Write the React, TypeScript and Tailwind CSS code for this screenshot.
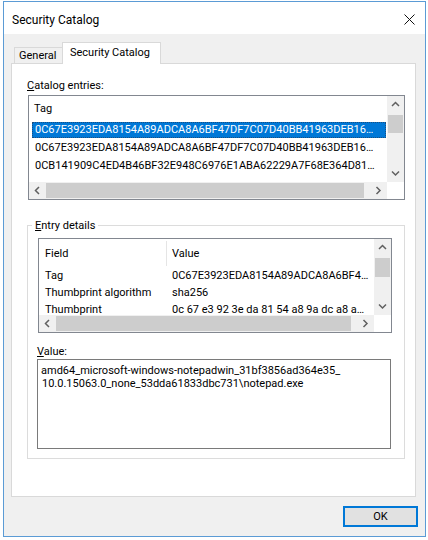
type Dir = "up" | "down" | "left" | "right";

function Arrow({ dir }: { dir: Dir }) {
  const vertical = dir === "up" || dir === "down";
  const pts = {
    up: "1,5 4.5,1.5 8,5",
    down: "1,1.5 4.5,5 8,1.5",
    left: "5,1 1.5,4.5 5,8",
    right: "1.5,1 5,4.5 1.5,8",
  }[dir];
  return (
    <svg width={vertical ? 9 : 7} height={vertical ? 7 : 9} viewBox={vertical ? "0 0 9 7" : "0 0 7 9"}>
      <polyline points={pts} fill="none" stroke="#606060" strokeWidth="1.5" />
    </svg>
  );
}

function VScroll({ thumb }: { thumb: string }) {
  return (
    <div className="flex flex-col bg-[#f0f0f0]">
      <div className="h-[17px] flex items-center justify-center">
        <Arrow dir="up" />
      </div>
      <div className={`mt-[2px] mx-[1px] bg-[#cdcdcd] ${thumb}`} />
      <div className="flex-1" />
      <div className="h-[17px] flex items-center justify-center">
        <Arrow dir="down" />
      </div>
    </div>
  );
}

function HScroll({ thumb }: { thumb: string }) {
  return (
    <div className="flex bg-[#f0f0f0]">
      <div className="w-[17px] flex items-center justify-center">
        <Arrow dir="left" />
      </div>
      <div className={`my-[1px] bg-[#cdcdcd] ${thumb}`} />
      <div className="flex-1" />
      <div className="w-[17px] flex items-center justify-center">
        <Arrow dir="right" />
      </div>
    </div>
  );
}

const catalogRows = [
  "0C67E3923EDA8154A89ADCA8A6BF47DF7C07D40BB41963DEB16…",
  "0C67E3923EDA8154A89ADCA8A6BF47DF7C07D40BB41963DEB16…",
  "0CB141909C4ED4B46BF32E948C6976E1ABA62229A7F68E364D81…",
];

const detailRows = [
  { field: "Tag", value: "0C67E3923EDA8154A89ADCA8A6BF47DF7C07D40BB41963DEB16…" },
  { field: "Thumbprint algorithm", value: "sha256" },
  { field: "Thumbprint", value: "0c 67 e3 92 3e da 81 54 a8 9a dc a8 a6 bf 47 df…" },
];

export default function App() {
  return (
    <div className="w-[428px] h-[540px] bg-white pt-[1px] pl-[3px] font-['Roboto','Liberation_Sans',sans-serif] text-[11px] text-black">
      <div className="w-[423px] h-[536px] border border-[#5b9bd5] bg-[#f0f0f0] flex flex-col">
        {/* title bar */}
        <div className="h-[32px] bg-white flex items-start justify-between pl-[8px] pr-[10px] pt-[11px]">
          <span className="text-[12px] leading-[15px]">Security Catalog</span>
          <svg width="11" height="11" viewBox="0 0 11 11" className="mt-[1px]">
            <path d="M0.5 0.5 L10.5 10.5 M10.5 0.5 L0.5 10.5" stroke="#111" strokeWidth="1" fill="none" />
          </svg>
        </div>

        <div className="flex-1 pl-[7px] pt-[8px]">
          {/* tabs */}
          <div className="flex items-end pl-[3px]">
            <div className="h-[16px] w-[48px] border-t border-l border-[#d9d9d9] flex items-center pl-[4px] pt-[1px]">
              General
            </div>
            <div className="relative z-10 h-[22px] w-[99px] -mb-px bg-white border-t border-l border-r border-[#d9d9d9] flex items-center pl-[7px]">
              Security Catalog
            </div>
          </div>

          {/* tab panel */}
          <div className="w-[405px] h-[434px] border border-[#d9d9d9] bg-white flex flex-col">
            <div className="mt-[15px] ml-[15px] leading-[13px]">
              <span className="underline">C</span>atalog entries:
            </div>

            {/* catalog list */}
            <div className="mt-[3px] ml-[16px] w-[377px] h-[105px] border border-[#828790] grid grid-cols-[1fr_17px] grid-rows-[1fr_17px]">
              <div className="overflow-hidden bg-white">
                <div className="h-[25px] flex items-center pl-[5px] pt-[2px]">Tag</div>
                {catalogRows.map((r, i) => (
                  <div key={i} className="h-[18px] pl-[3px] pr-[1px] flex">
                    <div
                      className={
                        i === 0
                          ? "flex-1 min-w-0 my-px pl-[2px] flex items-center bg-[#0078d7] text-white border border-dotted border-[#1b4f80]"
                          : "flex-1 min-w-0 pl-[3px] flex items-center"
                      }
                    >
                      <span className="block truncate">{r}</span>
                    </div>
                  </div>
                ))}
              </div>
              <VScroll thumb="h-[18px]" />
              <HScroll thumb="w-[318px]" />
              <div className="bg-white" />
            </div>

            {/* entry details group */}
            <div className="relative mt-[25px] ml-[15px] w-[378px] border border-[#dcdcdc] pb-[9px]">
              <span className="absolute -top-[7px] left-[4px] bg-white px-[3px] leading-[14px]">
                <span className="underline">E</span>ntry details
              </span>

              <div className="mt-[12px] ml-[10px] w-[354px] h-[95px] border border-[#828790] grid grid-cols-[1fr_17px] grid-rows-[1fr_17px]">
                <div className="overflow-hidden bg-white">
                  <div className="h-[29px] flex">
                    <div className="w-[127px] pl-[6px] flex items-center pt-[1px]">Field</div>
                    <div className="w-px my-[2px] bg-[#e5e5e5]" />
                    <div className="flex-1 pl-[5px] flex items-center pt-[1px]">Value</div>
                  </div>
                  {detailRows.map((r) => (
                    <div key={r.field} className="h-[17px] flex items-center">
                      <div className="w-[128px] pl-[6px] whitespace-nowrap">{r.field}</div>
                      <div className="flex-1 min-w-0 pl-[5px] pr-[4px]">
                        <span className="block truncate">{r.value}</span>
                      </div>
                    </div>
                  ))}
                </div>
                <VScroll thumb="h-[19px]" />
                <HScroll thumb="w-[295px]" />
                <div className="bg-white" />
              </div>

              <div className="mt-[12px] ml-[9px] leading-[13px]">
                <span className="underline">V</span>alue:
              </div>
              <div className="mt-[1px] ml-[9px] w-[354px] h-[90px] border border-[#7a7a7a] pt-[4px] pl-[3px] leading-[13px] whitespace-nowrap">
                <div>amd64_microsoft-windows-notepadwin_31bf3856ad364e35_</div>
                <div className="pl-[1px]">{"10.0.15063.0_none_53dda61833dbc731\\notepad.exe"}</div>
              </div>
            </div>
          </div>

          {/* footer */}
          <div className="flex justify-end pr-[7px] mt-[9px]">
            <button className="w-[75px] h-[21px] border-2 border-[#0078d7] bg-[#e1e1e1] flex items-center justify-center leading-none">
              OK
            </button>
          </div>
        </div>
      </div>
    </div>
  );
}
